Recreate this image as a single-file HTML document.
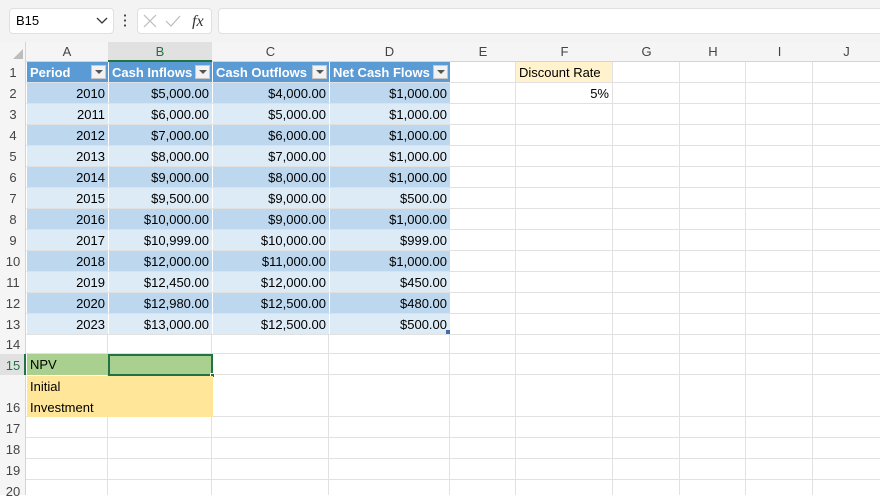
<!DOCTYPE html>
<html><head><meta charset="utf-8"><style>
*{margin:0;padding:0;box-sizing:border-box}
body{width:880px;height:495px;overflow:hidden;background:#fff;font-family:"Liberation Sans",sans-serif;font-size:13px;position:relative;color:#000}
.a{position:absolute}
.c{position:absolute;height:20px;line-height:22px;padding:0 3px;white-space:nowrap;overflow:hidden}
.r{text-align:right}
.hd{color:#fff;font-weight:bold;background:#5b9bd5}
.d{background:#bdd7ee}.l{background:#ddebf7}
.fb{position:absolute;right:2px;top:3px;width:15px;height:14px;background:#f2f2f2;border:1px solid #c8c8c8}
.fb:after{content:"";position:absolute;left:3px;top:4px;border-left:4px solid transparent;border-right:4px solid transparent;border-top:4px solid #555}
.ch{position:absolute;top:42px;height:20px;line-height:20px;text-align:center;color:#444;font-size:13px}
.rh{position:absolute;left:0;width:26px;text-align:center;color:#444;font-size:13px}
</style></head><body>
<div class="a" style="left:0;top:0;width:880px;height:42px;background:#f3f3f3"></div>
<div class="a" style="left:9px;top:8px;width:105px;height:26px;background:#fff;border:1px solid #e0e0e0;border-radius:4px"></div>
<div class="a" style="left:16px;top:13px;font-size:13px">B15</div>
<svg class="a" style="left:96px;top:17px" width="12" height="8"><path d="M1 1 L6 6 L11 1" stroke="#333" stroke-width="1.3" fill="none"/></svg>
<div class="a" style="left:124px;top:13px;width:2px;height:16px;background:radial-gradient(circle,#444 1px,transparent 1.2px) 0 0/2px 5px"></div>
<div class="a" style="left:137px;top:8px;width:75px;height:26px;background:#fff;border:1px solid #e0e0e0;border-radius:4px"></div>
<svg class="a" style="left:142px;top:13px" width="66" height="16"><path d="M2 2 L14 14 M14 2 L2 14" stroke="#bbb" stroke-width="1.2"/><path d="M24 8 L29 13 L38 3" stroke="#bbb" stroke-width="1.2" fill="none"/><text x="50" y="13" font-family="Liberation Serif" font-style="italic" font-size="16" fill="#333">fx</text></svg>
<div class="a" style="left:218px;top:8px;width:670px;height:26px;background:#fff;border:1px solid #e0e0e0;border-radius:4px"></div>
<div class="a" style="left:0;top:42px;width:880px;height:20px;background:#f5f5f5;border-bottom:1px solid #d4d4d4"></div>
<div class="a" style="left:0;top:42px;width:26px;height:453px;background:#f5f5f5;border-right:1px solid #d4d4d4"></div>
<div class="a" style="left:108px;top:42px;width:104px;height:20px;background:#e1e1e1;border-bottom:2px solid #217346"></div>
<div class="a" style="left:0;top:354px;width:26px;height:21px;background:#e1e1e1;border-right:2px solid #217346"></div>
<svg class="a" style="left:12px;top:48px" width="12" height="12"><path d="M11 1 L11 11 L1 11 Z" fill="#bdbdbd"/></svg>
<div class="ch" style="left:26px;width:82px">A</div><div class="ch" style="left:108px;width:104px;color:#217346">B</div><div class="ch" style="left:212px;width:117px">C</div><div class="ch" style="left:329px;width:121px">D</div><div class="ch" style="left:450px;width:66px">E</div><div class="ch" style="left:516px;width:97px">F</div><div class="ch" style="left:613px;width:67px">G</div><div class="ch" style="left:680px;width:66px">H</div><div class="ch" style="left:746px;width:67px">I</div><div class="ch" style="left:813px;width:67px">J</div>
<svg class="a" style="left:26px;top:62px" width="854" height="433">
<g stroke="#e1e1e1" stroke-width="1">
<path d="M81.5 0V433M185.5 0V433M302.5 0V433M423.5 0V433M489.5 0V433M586.5 0V433M653.5 0V433M719.5 0V433M786.5 0V433"/>
<path d="M0 20.5H854M0 41.5H854M0 62.5H854M0 83.5H854M0 104.5H854M0 125.5H854M0 146.5H854M0 167.5H854M0 188.5H854M0 209.5H854M0 230.5H854M0 251.5H854M0 272.5H854M0 291.5H854M0 312.5H854M0 354.5H854M0 375.5H854M0 396.5H854M0 417.5H854"/>
</g></svg>
<div class="rh" style="top:65px">1</div><div class="rh" style="top:86px">2</div><div class="rh" style="top:107px">3</div><div class="rh" style="top:128px">4</div><div class="rh" style="top:149px">5</div><div class="rh" style="top:170px">6</div><div class="rh" style="top:191px">7</div><div class="rh" style="top:212px">8</div><div class="rh" style="top:233px">9</div><div class="rh" style="top:254px">10</div><div class="rh" style="top:275px">11</div><div class="rh" style="top:296px">12</div><div class="rh" style="top:317px">13</div><div class="rh" style="top:337px">14</div><div class="rh" style="top:358px;color:#217346">15</div><div class="rh" style="top:400px">16</div><div class="rh" style="top:421px">17</div><div class="rh" style="top:442px">18</div><div class="rh" style="top:463px">19</div><div class="rh" style="top:484px">20</div>
<div class="c hd" style="left:27px;top:62px;width:81px">Period<span class="fb"></span></div>
<div class="c hd" style="left:109px;top:62px;width:103px">Cash Inflows<span class="fb"></span></div>
<div class="c hd" style="left:213px;top:62px;width:116px">Cash Outflows<span class="fb"></span></div>
<div class="c hd" style="left:330px;top:62px;width:120px">Net Cash Flows<span class="fb"></span></div>
<div class="c r d" style="left:27px;top:83px;width:81px">2010</div><div class="c r d" style="left:109px;top:83px;width:103px">$5,000.00</div><div class="c r d" style="left:213px;top:83px;width:116px">$4,000.00</div><div class="c r d" style="left:330px;top:83px;width:120px">$1,000.00</div>
<div class="c r l" style="left:27px;top:104px;width:81px">2011</div><div class="c r l" style="left:109px;top:104px;width:103px">$6,000.00</div><div class="c r l" style="left:213px;top:104px;width:116px">$5,000.00</div><div class="c r l" style="left:330px;top:104px;width:120px">$1,000.00</div>
<div class="c r d" style="left:27px;top:125px;width:81px">2012</div><div class="c r d" style="left:109px;top:125px;width:103px">$7,000.00</div><div class="c r d" style="left:213px;top:125px;width:116px">$6,000.00</div><div class="c r d" style="left:330px;top:125px;width:120px">$1,000.00</div>
<div class="c r l" style="left:27px;top:146px;width:81px">2013</div><div class="c r l" style="left:109px;top:146px;width:103px">$8,000.00</div><div class="c r l" style="left:213px;top:146px;width:116px">$7,000.00</div><div class="c r l" style="left:330px;top:146px;width:120px">$1,000.00</div>
<div class="c r d" style="left:27px;top:167px;width:81px">2014</div><div class="c r d" style="left:109px;top:167px;width:103px">$9,000.00</div><div class="c r d" style="left:213px;top:167px;width:116px">$8,000.00</div><div class="c r d" style="left:330px;top:167px;width:120px">$1,000.00</div>
<div class="c r l" style="left:27px;top:188px;width:81px">2015</div><div class="c r l" style="left:109px;top:188px;width:103px">$9,500.00</div><div class="c r l" style="left:213px;top:188px;width:116px">$9,000.00</div><div class="c r l" style="left:330px;top:188px;width:120px">$500.00</div>
<div class="c r d" style="left:27px;top:209px;width:81px">2016</div><div class="c r d" style="left:109px;top:209px;width:103px">$10,000.00</div><div class="c r d" style="left:213px;top:209px;width:116px">$9,000.00</div><div class="c r d" style="left:330px;top:209px;width:120px">$1,000.00</div>
<div class="c r l" style="left:27px;top:230px;width:81px">2017</div><div class="c r l" style="left:109px;top:230px;width:103px">$10,999.00</div><div class="c r l" style="left:213px;top:230px;width:116px">$10,000.00</div><div class="c r l" style="left:330px;top:230px;width:120px">$999.00</div>
<div class="c r d" style="left:27px;top:251px;width:81px">2018</div><div class="c r d" style="left:109px;top:251px;width:103px">$12,000.00</div><div class="c r d" style="left:213px;top:251px;width:116px">$11,000.00</div><div class="c r d" style="left:330px;top:251px;width:120px">$1,000.00</div>
<div class="c r l" style="left:27px;top:272px;width:81px">2019</div><div class="c r l" style="left:109px;top:272px;width:103px">$12,450.00</div><div class="c r l" style="left:213px;top:272px;width:116px">$12,000.00</div><div class="c r l" style="left:330px;top:272px;width:120px">$450.00</div>
<div class="c r d" style="left:27px;top:293px;width:81px">2020</div><div class="c r d" style="left:109px;top:293px;width:103px">$12,980.00</div><div class="c r d" style="left:213px;top:293px;width:116px">$12,500.00</div><div class="c r d" style="left:330px;top:293px;width:120px">$480.00</div>
<div class="c r l" style="left:27px;top:314px;width:81px">2023</div><div class="c r l" style="left:109px;top:314px;width:103px">$13,000.00</div><div class="c r l" style="left:213px;top:314px;width:116px">$12,500.00</div><div class="c r l" style="left:330px;top:314px;width:120px">$500.00</div>
<div class="a" style="left:446px;top:330px;width:4px;height:4px;background:#3b6db0"></div>
<div class="c" style="left:516px;top:62px;width:96px;background:#fff2cc">Discount Rate</div>
<div class="c r" style="left:516px;top:83px;width:96px">5%</div>
<div class="c" style="left:27px;top:354px;width:81px;height:21px;background:#a9d08e">NPV</div>
<div class="a" style="left:108px;top:354px;width:105px;height:22px;background:#a9d08e;border:2px solid #217346"></div>
<div class="a" style="left:210px;top:373px;width:5px;height:5px;background:#217346;border:1px solid #fff"></div>
<div class="a" style="left:27px;top:376px;width:186px;height:41px;background:#ffe699"></div>
<div class="a" style="left:30px;top:376px;line-height:21px">Initial<br>Investment</div>
</body></html>
